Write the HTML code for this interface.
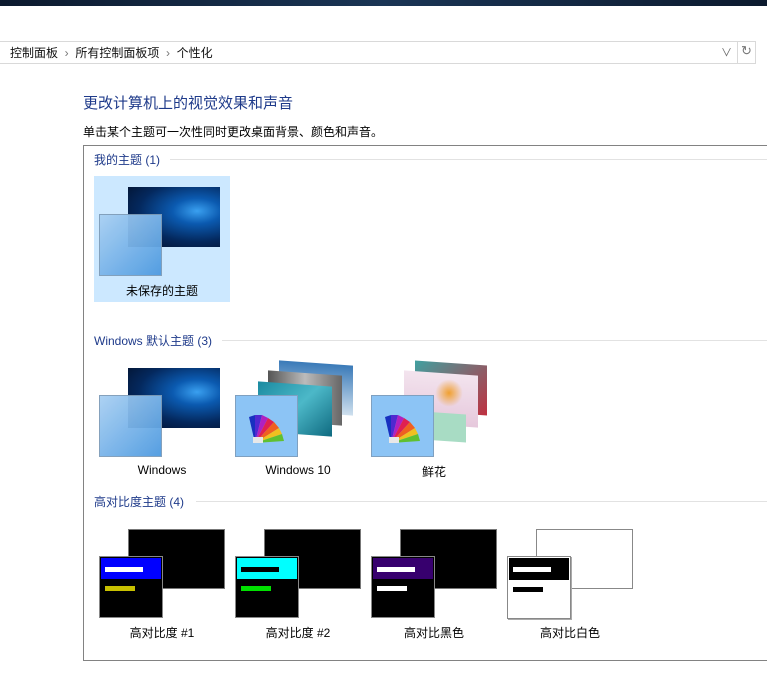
<!DOCTYPE html>
<html><head><meta charset="utf-8"><style>
*{margin:0;padding:0;box-sizing:border-box}
body{width:767px;height:682px;background:#fff;position:relative;overflow:hidden;font-family:"Liberation Sans","Noto Sans CJK SC",sans-serif;font-size:12px;color:#000}
.a{position:absolute}
.hdr{color:#1e3a8a;font-size:12px;white-space:nowrap}
.line{height:1px;background:#e2e2e2}
.lbl{position:absolute;width:136px;text-align:center;font-size:12px}
.dark{background:radial-gradient(ellipse at 75% 40%,#3aa0f0 0%,#0b5ab0 25%,#04285d 60%,#020c22 100%)}
.sq{background:linear-gradient(135deg,#a9d0f3,#4d9ae0);border:1px solid #7f9db9;opacity:.95}
.sq2{background:#8cc4f5;border:1px solid #7fa0c0}
</style></head><body>
<div class="a" style="left:0;top:0;width:767px;height:6px;background:linear-gradient(90deg,#0c1a2e,#1a3555,#0c1a2e)"></div>
<div class="a" style="left:0;top:41px;width:756px;height:23px;border:1px solid #d9d9d9;border-left:none"></div>
<div class="a" style="left:737px;top:42px;width:1px;height:21px;background:#d9d9d9"></div>
<div class="a" style="left:10px;top:44px;font-size:12px;color:#111">控制面板 &nbsp;<span style="color:#777">›</span>&nbsp; 所有控制面板项 &nbsp;<span style="color:#777">›</span>&nbsp; 个性化</div>
<div class="a" style="left:721px;top:44px;color:#666;font-size:11px">∨</div>
<div class="a" style="left:741px;top:43px;color:#777;font-size:13px">↻</div>
<div class="a" style="left:83px;top:92px;font-size:15px;color:#1e3a8a">更改计算机上的视觉效果和声音</div>
<div class="a" style="left:83px;top:123px;font-size:12px">单击某个主题可一次性同时更改桌面背景、颜色和声音。</div>
<div class="a" style="left:83px;top:145px;width:700px;height:516px;border:1px solid #828282"></div>

<div class="a hdr" style="left:94px;top:151px">我的主题 (1)</div>
<div class="a line" style="left:170px;top:159px;width:597px"></div>
<div class="a" style="left:94px;top:176px;width:136px;height:126px;background:#cce8ff"></div>
<div class="a dark" style="left:128px;top:187px;width:92px;height:60px"></div>
<div class="a sq" style="left:99px;top:214px;width:63px;height:62px"></div>
<div class="lbl" style="left:94px;top:282px">未保存的主题</div>

<div class="a hdr" style="left:94px;top:332px">Windows 默认主题 (3)</div>
<div class="a line" style="left:222px;top:340px;width:545px"></div>
<div class="a dark" style="left:128px;top:368px;width:92px;height:60px"></div>
<div class="a sq" style="left:99px;top:395px;width:63px;height:62px"></div>
<div class="lbl" style="left:94px;top:463px">Windows</div>

<div class="a" style="left:279px;top:363px;width:74px;height:50px;background:linear-gradient(#3a7ab8,#cfe0ee);transform:skewY(4deg)"></div>
<div class="a" style="left:268px;top:373px;width:74px;height:50px;background:linear-gradient(90deg,#555,#bbb,#666);transform:skewY(4deg)"></div>
<div class="a" style="left:258px;top:384px;width:74px;height:50px;background:linear-gradient(135deg,#1a8aa0,#4cb8c8,#0f6a80);transform:skewY(4deg)"></div>
<div class="a sq2" style="left:235px;top:395px;width:63px;height:62px"></div>
<svg class="a" style="left:243px;top:403px" width="48" height="46" viewBox="0 0 48 46">
<g transform="translate(12,40)">
<path d="M0 0 L-6 -26 L0 -28 Z" fill="#1830c0"/>
<path d="M0 0 L0 -28 L7 -28 Z" fill="#5028d0"/>
<path d="M0 0 L7 -28 L13 -25 Z" fill="#b020c0"/>
<path d="M0 0 L13 -25 L19 -21 Z" fill="#e02050"/>
<path d="M0 0 L19 -21 L24 -15 Z" fill="#f06020"/>
<path d="M0 0 L24 -15 L27 -9 Z" fill="#f0c020"/>
<path d="M0 0 L27 -9 L29 -2 Z" fill="#60c030"/>
<rect x="-2" y="-6" width="10" height="6" fill="#e8e8e8"/>
</g></svg>
<div class="lbl" style="left:230px;top:463px">Windows 10</div>

<div class="a" style="left:415px;top:363px;width:72px;height:50px;background:linear-gradient(135deg,#40a0a0,#c03040);transform:skewY(4deg)"></div>
<div class="a" style="left:404px;top:373px;width:74px;height:52px;background:linear-gradient(#f3e4ee,#e6c8dc);transform:skewY(4deg)"></div>
<div class="a" style="left:434px;top:378px;width:30px;height:30px;background:radial-gradient(#f0a030,transparent 65%)"></div>
<div class="a" style="left:394px;top:412px;width:72px;height:28px;background:#a8dcc4;transform:skewY(4deg)"></div>
<div class="a sq2" style="left:371px;top:395px;width:63px;height:62px"></div>
<svg class="a" style="left:379px;top:403px" width="48" height="46" viewBox="0 0 48 46">
<g transform="translate(12,40)">
<path d="M0 0 L-6 -26 L0 -28 Z" fill="#1830c0"/>
<path d="M0 0 L0 -28 L7 -28 Z" fill="#5028d0"/>
<path d="M0 0 L7 -28 L13 -25 Z" fill="#b020c0"/>
<path d="M0 0 L13 -25 L19 -21 Z" fill="#e02050"/>
<path d="M0 0 L19 -21 L24 -15 Z" fill="#f06020"/>
<path d="M0 0 L24 -15 L27 -9 Z" fill="#f0c020"/>
<path d="M0 0 L27 -9 L29 -2 Z" fill="#60c030"/>
<rect x="-2" y="-6" width="10" height="6" fill="#e8e8e8"/>
</g></svg>
<div class="lbl" style="left:366px;top:463px">鲜花</div>

<div class="a hdr" style="left:94px;top:493px">高对比度主题 (4)</div>
<div class="a line" style="left:196px;top:501px;width:571px"></div>

<div class="a" style="left:128px;top:529px;width:97px;height:60px;background:#000;border:1px solid #777"></div>
<div class="a" style="left:99px;top:556px;width:64px;height:62px;background:#000;border:1px solid #888"></div>
<div class="a" style="left:101px;top:558px;width:60px;height:21px;background:#0000ff"></div>
<div class="a" style="left:105px;top:567px;width:38px;height:5px;background:#fff"></div>
<div class="a" style="left:105px;top:586px;width:30px;height:5px;background:#c8c000"></div>
<div class="lbl" style="left:94px;top:624px">高对比度 #1</div>

<div class="a" style="left:264px;top:529px;width:97px;height:60px;background:#000;border:1px solid #777"></div>
<div class="a" style="left:235px;top:556px;width:64px;height:62px;background:#000;border:1px solid #888"></div>
<div class="a" style="left:237px;top:558px;width:60px;height:21px;background:#00ffff"></div>
<div class="a" style="left:241px;top:567px;width:38px;height:5px;background:#000"></div>
<div class="a" style="left:241px;top:586px;width:30px;height:5px;background:#00e000"></div>
<div class="lbl" style="left:230px;top:624px">高对比度 #2</div>

<div class="a" style="left:400px;top:529px;width:97px;height:60px;background:#000;border:1px solid #777"></div>
<div class="a" style="left:371px;top:556px;width:64px;height:62px;background:#000;border:1px solid #888"></div>
<div class="a" style="left:373px;top:558px;width:60px;height:21px;background:#37006e"></div>
<div class="a" style="left:377px;top:567px;width:38px;height:5px;background:#fff"></div>
<div class="a" style="left:377px;top:586px;width:30px;height:5px;background:#fff"></div>
<div class="lbl" style="left:366px;top:624px">高对比黑色</div>

<div class="a" style="left:536px;top:529px;width:97px;height:60px;background:#fff;border:1px solid #888"></div>
<div class="a" style="left:507px;top:556px;width:64px;height:63px;background:#fff;border:1px solid #888;box-shadow:1px 1px 0 #aaa"></div>
<div class="a" style="left:509px;top:558px;width:60px;height:22px;background:#000"></div>
<div class="a" style="left:513px;top:567px;width:38px;height:5px;background:#fff"></div>
<div class="a" style="left:513px;top:587px;width:30px;height:5px;background:#000"></div>
<div class="lbl" style="left:502px;top:624px">高对比白色</div>
</body></html>
